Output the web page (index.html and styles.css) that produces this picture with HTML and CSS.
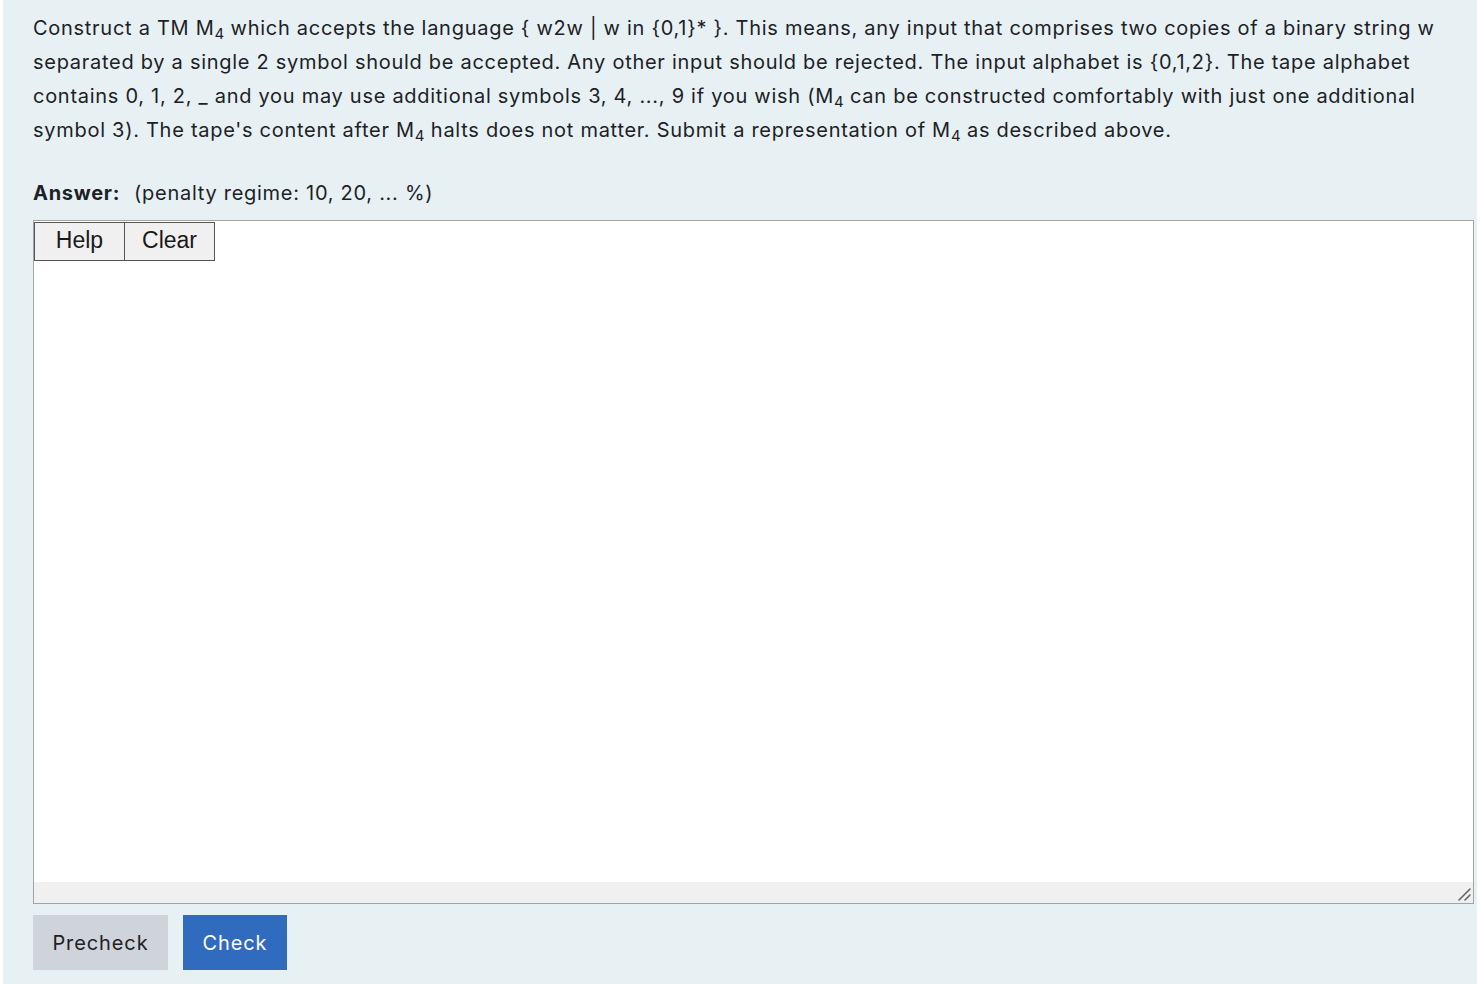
FILE: index.html
```html
<!DOCTYPE html>
<html>
<head>
<meta charset="utf-8">
<link rel="stylesheet" href="styles.css">
</head>
<body>
<div class="que">
  <p class="qtext">Construct a TM M<sub>4</sub> which accepts the language { w2w | w in {0,1}* }. This means, any input that comprises two copies of a binary string w separated by a single 2 symbol should be accepted. Any other input should be rejected. The input alphabet is {0,1,2}. The tape alphabet contains 0, 1, 2, _ and you may use additional symbols 3, 4, ..., 9 if you wish (M<sub>4</sub> can be constructed comfortably with just one additional symbol 3). The tape's content after M<sub>4</sub> halts does not matter. Submit a representation of M<sub>4</sub> as described above.</p>
  <div class="answer-label"><b>Answer:</b><span class="penalty">(penalty regime: 10, 20, ... %)</span></div>
  <div class="editor">
    <div class="toolbar"><button class="tb">Help</button><button class="tb">Clear</button></div>
    <div class="area"></div>
    <div class="hbar">
      <svg class="grip" width="14" height="14" viewBox="0 0 14 14"><path d="M2 13 L13 2 M8 13 L13 8" stroke="#666" stroke-width="1.6" stroke-linecap="round"/></svg>
    </div>
  </div>
  <div class="actions">
    <button class="btn precheck">Precheck</button>
    <button class="btn check">Check</button>
  </div>
</div>
</body>
</html>
```

FILE: styles.css
```css
html, body { margin: 0; padding: 0; background: #ffffff; }
body { font-family: Inter, "Open Sans", sans-serif; color: #1d2125; }
.que {
  margin-left: 3px;
  width: 1474px;
  height: 984px;
  box-sizing: border-box;
  background: #e7f1f4;
  padding: 11px 0 0 30px;
}
.qtext {
  margin: 0;
  width: 1440px;
  font-size: 20px;
  line-height: 34px;
  letter-spacing: 0.72px;
}
.qtext sub { font-size: 15px; line-height: 0; vertical-align: -4px; letter-spacing: 0; }
.answer-label {
  margin-top: 29px;
  font-size: 20px;
  line-height: 34px;
  display: flex;
  gap: 14px;
  letter-spacing: 0.72px;
}
.answer-label b { font-weight: 700; }
.editor {
  margin-top: 10px;
  width: 1441px;
  height: 684px;
  box-sizing: border-box;
  border: 1px solid #a3a3a3;
  background: #ffffff;
  display: flex;
  flex-direction: column;
}
.toolbar { display: flex; padding: 1px 0 0 0; }
.tb {
  font-family: "Liberation Sans", Arial, sans-serif;
  font-size: 23px;
  height: 39px;
  width: 91px;
  border: 1px solid #555;
  background: #f0f0f0;
  color: #1a1a1a;
  padding: 0 0 3px 0;
  margin: 0 -1px 0 0;
}
.area { flex: 1; }
.hbar {
  height: 21px;
  background: #f0f0f0;
  display: flex;
  justify-content: flex-end;
  align-items: flex-end;
}
.grip { margin: 0 2px 2px 0; }
.actions { display: flex; gap: 15px; margin-top: 11px; }
.btn {
  font-family: Inter, "Open Sans", sans-serif;
  font-size: 20px;
  letter-spacing: 0.9px;
  height: 55px;
  border: none;
  padding: 0;
}
.precheck { background: #ced4da; color: #1d2125; width: 135px; }
.check { background: #316bbd; color: #ffffff; width: 104px; }
```
